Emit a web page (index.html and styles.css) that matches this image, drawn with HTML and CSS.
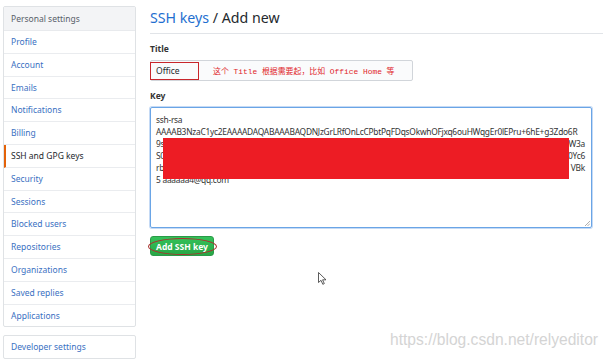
FILE: index.html
```html
<!DOCTYPE html>
<html lang="zh-CN">
<head>
    <meta charset="UTF-8">
    <meta name="viewport" content="width=device-width, initial-scale=1.0">
    <title>SSH keys / Add new</title>
    <link rel="stylesheet" href="styles.css">
</head>
<body>
    <div class="page">
        <div class="sidebar">
            <nav class="menu">
                <div class="menu-heading">Personal settings</div>
                <a class="menu-item" href="#">Profile</a>
                <a class="menu-item" href="#">Account</a>
                <a class="menu-item" href="#">Emails</a>
                <a class="menu-item" href="#">Notifications</a>
                <a class="menu-item" href="#">Billing</a>
                <a class="menu-item selected" href="#">SSH and GPG keys</a>
                <a class="menu-item" href="#">Security</a>
                <a class="menu-item" href="#">Sessions</a>
                <a class="menu-item" href="#">Blocked users</a>
                <a class="menu-item" href="#">Repositories</a>
                <a class="menu-item" href="#">Organizations</a>
                <a class="menu-item" href="#">Saved replies</a>
                <a class="menu-item" href="#">Applications</a>
            </nav>
            <nav class="menu">
                <a class="menu-item" href="#">Developer settings</a>
            </nav>
        </div>

        <div class="main">
            <h2 class="subhead"><a href="#">SSH keys</a> / Add new</h2>

            <div class="form-group">
                <label>Title</label>
                <div class="input">
                    <span class="title-value">Office</span>
                    <span class="note">这个 Title 根据需要起，比如 Office Home 等</span>
                </div>
            </div>

            <div class="form-group">
                <label>Key</label>
                <div class="key-box">
                    <div class="key-line">ssh-rsa</div>
                    <div class="key-line">AAAAB3NzaC1yc2EAAAADAQABAAABAQDNJzGrLRfOnLcCPbtPqFDqsOkwhOFjxq6ouHWqgEr0lEPru+6hE+g3Zdo6R</div>
                    <div class="key-line split"><span>9s</span><span>W3a</span></div>
                    <div class="key-line split"><span>S0</span><span>0Yc6</span></div>
                    <div class="key-line split"><span>rb</span><span>VBk</span></div>
                    <div class="key-line">5 aaaaaa4@qq.com</div>
                    <div class="redact"></div>
                    <svg class="grip" width="6" height="6" viewBox="0 0 6 6">
                        <path d="M6 1L1 6M6 3.5L3.5 6" stroke="#999" stroke-width="0.8"/>
                    </svg>
                </div>
            </div>

            <div class="actions">
                <button class="btn-primary">Add SSH key</button>
                <span class="circle"></span>
            </div>
        </div>
    </div>

    <svg class="cursor" width="9" height="13" viewBox="0 0 9 13">
        <path d="M0.5 0.5L0.5 10.5L3 8.3L4.8 12.3L6.3 11.6L4.6 7.8L8 7.8Z" fill="#fff" stroke="#333" stroke-width="0.8" stroke-linejoin="round"/>
    </svg>

    <div class="watermark">https://blog.csdn.net/relyeditor</div>
</body>
</html>
```

FILE: styles.css
```css
body {
    margin: 0;
    background-color: #fff;
    font-family: 'Noto Sans', 'Open Sans', sans-serif;
    color: #24292e;
    width: 611px;
    height: 361px;
    overflow: hidden;
    position: relative;
}
a {
    text-decoration: none;
}
.page {
    display: flex;
    padding: 6px 0 0 3px;
}
.sidebar {
    width: 133px;
    flex-shrink: 0;
}
.menu {
    border: 1px solid #dfe2e5;
    border-radius: 2px;
    background-color: #fff;
    margin-bottom: 8px;
}
.menu-heading {
    height: 23px;
    line-height: 23px;
    padding-left: 7px;
    font-size: 8.5px;
    color: #586069;
    background-color: #f3f4f6;
    border-bottom: 1px solid #e8eaed;
}
.menu-item {
    display: block;
    height: 21.8px;
    line-height: 21.8px;
    padding-left: 7px;
    font-size: 8.5px;
    color: #3a70c2;
    border-bottom: 1px solid #eaecef;
}
.menu-item:last-child {
    border-bottom: none;
}
.menu-item.selected {
    color: #24292e;
    padding-left: 5px;
    border-left: 2px solid #e36209;
}
.main {
    flex: 1;
    margin-left: 14px;
    margin-right: 8px;
}
.subhead {
    margin: 0;
    padding-top: 2px;
    height: 25px;
    line-height: 20px;
    font-size: 14.2px;
    font-weight: normal;
    border-bottom: 1px solid #e1e4e8;
}
.subhead a {
    color: #1f6fd0;
}
.form-group {
    margin-top: 9px;
}
label {
    display: block;
    font-size: 8.5px;
    font-weight: bold;
    line-height: 12px;
    margin-bottom: 5px;
    color: #333;
}
.input {
    display: flex;
    align-items: center;
    width: 261px;
    height: 19px;
    border: 1px solid #d1d5da;
    border-radius: 2px;
    background-color: #fafbfc;
}
.title-value {
    box-sizing: border-box;
    width: 49px;
    height: 18px;
    line-height: 16px;
    padding-left: 5px;
    margin-left: -1px;
    border: 1px solid #c8262b;
    font-size: 8.5px;
    color: #24292e;
}
.note {
    margin-left: 14px;
    font-family: 'Liberation Mono', 'Noto Sans CJK SC', monospace;
    font-size: 7.9px;
    color: #e0242a;
}
.key-box {
    position: relative;
    box-sizing: border-box;
    width: 442px;
    height: 121px;
    padding: 6px 0 0 5px;
    border: 1px solid #6aa5e6;
    border-radius: 2px;
    box-shadow: 0 0 0 1px rgba(90, 150, 225, 0.35);
    font-size: 8.4px;
    line-height: 12px;
    color: #333;
}
.key-line {
    white-space: nowrap;
    letter-spacing: -0.25px;
}
.split {
    display: flex;
    justify-content: space-between;
    width: 429px;
}
.redact {
    position: absolute;
    left: 12px;
    top: 30px;
    width: 406px;
    height: 41px;
    background-color: #ed1c24;
}
.grip {
    position: absolute;
    right: 1px;
    bottom: 1px;
}
.actions {
    position: relative;
    display: flex;
    margin-top: 8px;
}
.btn-primary {
    width: 64px;
    height: 20px;
    padding: 0;
    border: 1px solid #2a9a47;
    border-radius: 3px;
    background-image: linear-gradient(#34c25a, #28a745);
    color: #fff;
    font-family: 'Noto Sans', sans-serif;
    font-size: 8.5px;
    font-weight: bold;
}
.circle {
    position: absolute;
    left: -2px;
    top: 2px;
    width: 67px;
    height: 15px;
    border: 1px solid #a8322e;
    border-radius: 50%;
}
.cursor {
    position: absolute;
    left: 318px;
    top: 272px;
}
.watermark {
    position: absolute;
    left: 390px;
    top: 331px;
    font-family: 'Liberation Sans', Arial, sans-serif;
    font-size: 15.6px;
    color: #d4d4d4;
}
```
